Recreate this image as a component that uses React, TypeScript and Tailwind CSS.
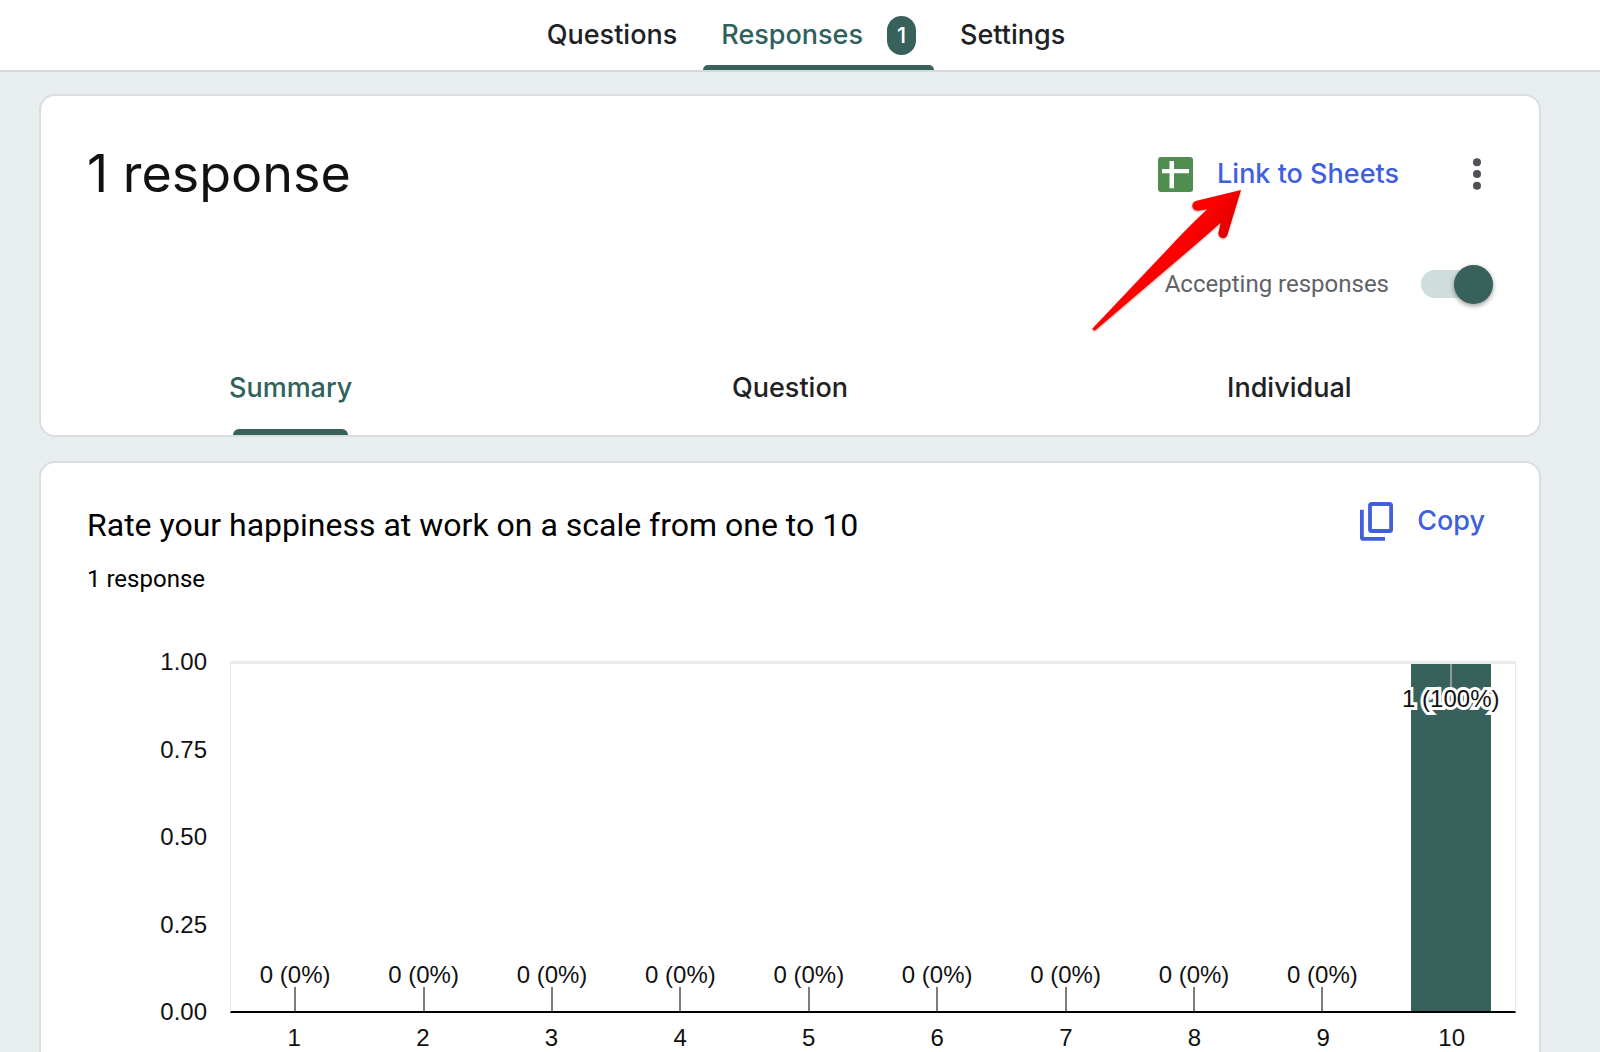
import React from "react";

const navTabs = [
  { label: "Questions", active: false },
  { label: "Responses", active: true, count: 1 },
  { label: "Settings", active: false },
];

const viewTabs = [
  { label: "Summary", active: true },
  { label: "Question", active: false },
  { label: "Individual", active: false },
];

const yTicks = ["1.00", "0.75", "0.50", "0.25", "0.00"];

const bars = [
  { label: "1", count: 0 },
  { label: "2", count: 0 },
  { label: "3", count: 0 },
  { label: "4", count: 0 },
  { label: "5", count: 0 },
  { label: "6", count: 0 },
  { label: "7", count: 0 },
  { label: "8", count: 0 },
  { label: "9", count: 0 },
  { label: "10", count: 1 },
];
const total = 1;

function SheetsIcon() {
  return (
    <svg width="35" height="35" viewBox="0 0 35 35" aria-hidden="true">
      <rect width="35" height="35" rx="3" fill="#4f8d50" />
      <path d="M11.5 4h4.5v8h15v4.2H16V31.3h-4.5V16.2H4V12h7.5z" fill="#fff" />
    </svg>
  );
}

function CopyIcon() {
  return (
    <svg width="33" height="39" viewBox="0 0 33 39" fill="none" stroke="#3f5fdf" strokeWidth="3.8" aria-hidden="true">
      <rect x="10" y="2" width="21.1" height="27" rx="1.6" />
      <path d="M1.9 7.8V35.4a1.5 1.5 0 0 0 1.5 1.5H25" />
    </svg>
  );
}

function MoreIcon() {
  return (
    <svg width="8" height="32" viewBox="0 0 8 32" fill="#505257" aria-hidden="true">
      <circle cx="4" cy="4.3" r="4" />
      <circle cx="4" cy="16" r="4" />
      <circle cx="4" cy="27.7" r="4" />
    </svg>
  );
}

function PointerArrow() {
  return (
    <svg
      className="pointer-events-none absolute top-[31px] -left-[68px] z-10 drop-shadow-[0_1px_1px_rgba(60,0,0,0.35)]"
      width="154"
      height="146"
      viewBox="90 202 462 438"
      aria-hidden="true"
    >
      <defs>
        <linearGradient id="arrowFill" gradientUnits="userSpaceOnUse" x1="410" y1="250" x2="520" y2="330">
          <stop offset="0.3" stopColor="#fe0000" />
          <stop offset="1" stopColor="#dd0000" />
        </linearGradient>
      </defs>
      <path
        d="M543 208L410 240Q396 244 397 257Q399 270 413 270L442 266Q400 304 330 378L97 624Q99 631 106 629L360 412Q430 352 482 306L475 338Q476 352 489 353Q500 352 503 340Z"
        fill="url(#arrowFill)"
      />
    </svg>
  );
}

function Header() {
  return (
    <header className="shrink-0 border-b-2 border-[#d5d9dc] bg-white">
      <nav className="flex h-[70px] justify-center gap-2 pl-3">
        {navTabs.map((tab) => (
          <button
            key={tab.label}
            type="button"
            className={`relative flex h-full items-center gap-6 px-[18px] text-[27px] font-medium ${
              tab.active ? "text-[#2f625b]" : "text-[#202124]"
            }`}
          >
            <span>{tab.label}</span>
            {tab.count !== undefined && (
              <span className="flex h-[39px] w-[29px] items-center justify-center rounded-full bg-[#39615c] text-[22px] text-white">
                {tab.count}
              </span>
            )}
            {tab.active && <span className="absolute inset-x-0 bottom-0 h-[5px] rounded-t-md bg-[#39615c]" />}
          </button>
        ))}
      </nav>
    </header>
  );
}

function ResponsesCard() {
  return (
    <section className="shrink-0 rounded-2xl border-2 border-[#d9dce0] bg-white pt-[45px]">
      <div className="flex h-[66px] items-center justify-between px-[46px]">
        <h1 className="text-[52px] text-[#111213]">1 response</h1>
        <div className="flex items-center gap-[62px]">
          <div className="relative">
            <a href="#sheets" className="flex items-center gap-6 text-[27px] leading-8 font-medium text-[#3f5fdf]">
              <SheetsIcon />
              <span>Link to Sheets</span>
            </a>
            <PointerArrow />
          </div>
          <button type="button" aria-label="More options" className="flex w-8 justify-center">
            <MoreIcon />
          </button>
        </div>
      </div>

      <label className="mt-[55px] mb-9 flex h-11 items-center justify-end gap-8 px-[46px] font-[Roboto,sans-serif] text-2xl text-[#5f6368]">
        <span>Accepting responses</span>
        <span className="relative flex h-7 w-[72px] items-center">
          <input
            type="checkbox"
            role="switch"
            defaultChecked
            className="peer h-7 w-full appearance-none rounded-full bg-[#cfdedd]"
          />
          <span className="pointer-events-none absolute left-0 size-[39px] rounded-full bg-[#39615c] shadow-[0_2px_5px_rgba(0,0,0,0.4)] peer-checked:right-0 peer-checked:left-auto" />
        </span>
      </label>

      <div className="grid grid-cols-3" role="tablist">
        {viewTabs.map((tab) => (
          <button
            key={tab.label}
            type="button"
            role="tab"
            aria-selected={tab.active}
            className={`flex h-[93px] justify-center text-[27px] font-medium ${
              tab.active ? "text-[#2f625b]" : "text-[#202124]"
            }`}
          >
            <span className="relative flex h-full items-center">
              {tab.label}
              {tab.active && <span className="absolute inset-x-1 bottom-0 h-[6px] rounded-t-md bg-[#39615c]" />}
            </span>
          </button>
        ))}
      </div>
    </section>
  );
}

function Bar({ count }: { count: number }) {
  const share = count / total;
  const text = `${count} (${share * 100}%)`;
  if (count === 0) {
    return (
      <div className="flex flex-col items-center justify-end">
        <span className="leading-6">{text}</span>
        <span className="h-6 w-[2px] bg-[#7d7d7d]" />
      </div>
    );
  }
  return (
    <div className="flex items-end justify-center">
      <div className="flex w-20 flex-col items-center bg-[#39615c]" style={{ height: `${share * 100}%` }}>
        <span className="h-[23px] w-[2px] bg-[#8d9b98]" />
        <span className="leading-6 whitespace-nowrap [-webkit-text-stroke:6px_white] [paint-order:stroke_fill]">
          {text}
        </span>
      </div>
    </div>
  );
}

function Chart() {
  return (
    <div className="mt-[66px] mr-[23px] flex font-['Liberation_Sans',Arial,sans-serif] text-2xl text-[#111]">
      <div className="w-[189px] shrink-0 pr-[23px] text-right">
        <div className="-my-[11px] flex h-[374px] flex-col justify-between">
          {yTicks.map((tick) => (
            <span key={tick} className="leading-6">
              {tick}
            </span>
          ))}
        </div>
      </div>
      <div className="flex-1">
        <div className="grid h-[352px] grid-cols-10 border-x border-t-[3px] border-b-2 border-x-[#e6e6e6] border-t-[#ebebeb] border-b-black">
          {bars.map((bar) => (
            <Bar key={bar.label} count={bar.count} />
          ))}
        </div>
        <div className="grid grid-cols-10 pt-[11px] text-center leading-7">
          {bars.map((bar) => (
            <span key={bar.label}>{bar.label}</span>
          ))}
        </div>
      </div>
    </div>
  );
}

function QuestionCard() {
  return (
    <section className="shrink-0 rounded-2xl border-2 border-[#d9dce0] bg-white pt-9 pb-14 font-[Roboto,sans-serif] text-black">
      <div className="flex items-start justify-between pr-[54px] pl-[46px]">
        <h2 className="text-[32px] leading-[52px]">Rate your happiness at work on a scale from one to 10</h2>
        <button
          type="button"
          className="flex h-11 items-center gap-6 font-[Inter,sans-serif] text-[27px] font-medium text-[#3f5fdf]"
        >
          <CopyIcon />
          <span>Copy</span>
        </button>
      </div>
      <p className="mt-3 pl-[46px] text-2xl leading-8">1 response</p>
      <Chart />
    </section>
  );
}

export default function App() {
  return (
    <div className="flex h-screen flex-col bg-[#e7eeed] font-[Inter,sans-serif]">
      <Header />
      <main className="flex min-h-0 flex-1 flex-col gap-6 overflow-y-auto pt-[22px] pr-[59px] pl-[39px] [scrollbar-width:none]">
        <ResponsesCard />
        <QuestionCard />
      </main>
    </div>
  );
}
